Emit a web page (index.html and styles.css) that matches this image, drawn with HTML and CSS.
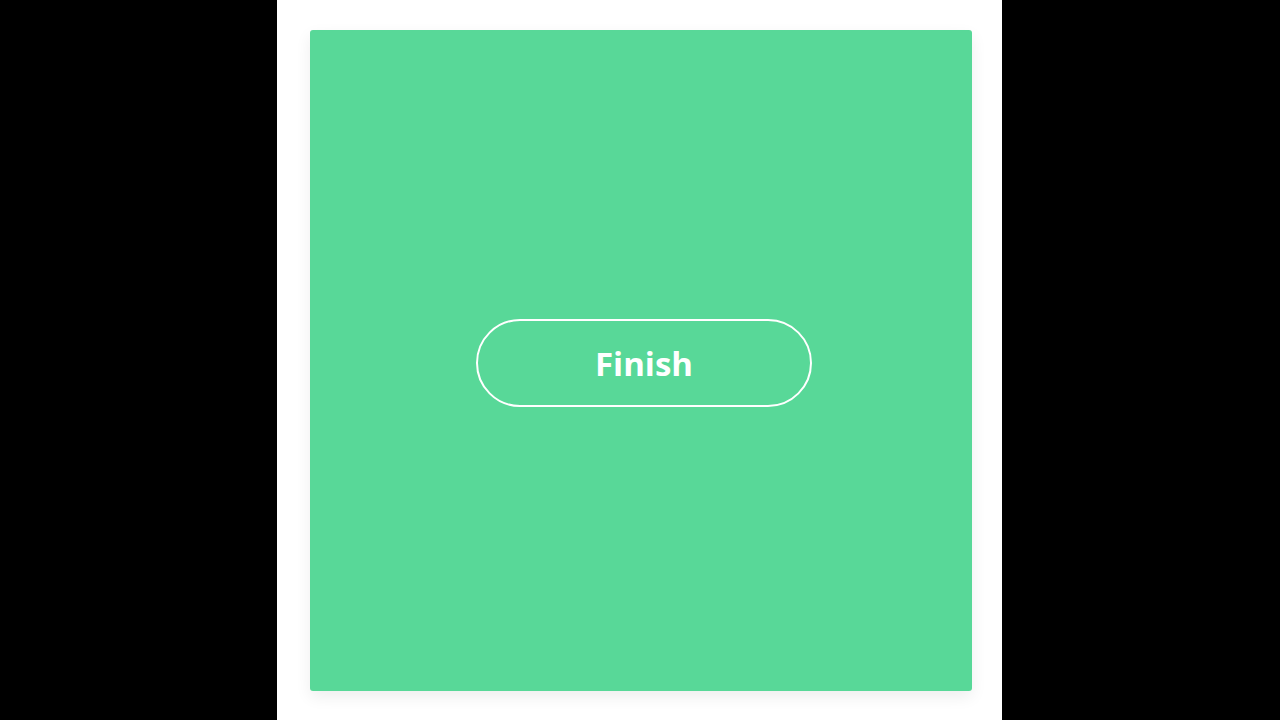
FILE: index.html
```html
<!DOCTYPE html>
<html>
<head>
<meta charset="utf-8">
<link rel="stylesheet" href="styles.css">
</head>
<body>
<div class="page">
  <div class="card">
    <button class="finish">Finish</button>
  </div>
</div>
</body>
</html>
```
FILE: styles.css
```css
html, body {
  margin: 0;
  height: 100%;
  background: #000;
}
body {
  font-family: "Open Sans", "Noto Sans", sans-serif;
}
.page {
  margin-left: 277px;
  width: 725px;
  height: 720px;
  background: #fff;
  box-sizing: border-box;
  padding: 30px 30px 0 33px;
}
.card {
  width: 662px;
  height: 661px;
  background: #58d898;
  border-radius: 3px;
  box-shadow: 0 6px 16px rgba(0, 0, 0, 0.07);
  display: flex;
  align-items: center;
  justify-content: center;
}
.finish {
  width: 336px;
  height: 88px;
  margin: 5px 0 0 6px;
  border: 2.5px solid #fff;
  border-radius: 44px;
  background: transparent;
  color: #fff;
  font-family: "Open Sans", "Noto Sans", sans-serif;
  font-weight: 700;
  font-size: 33px;
  padding: 0;
  cursor: pointer;
}
```
